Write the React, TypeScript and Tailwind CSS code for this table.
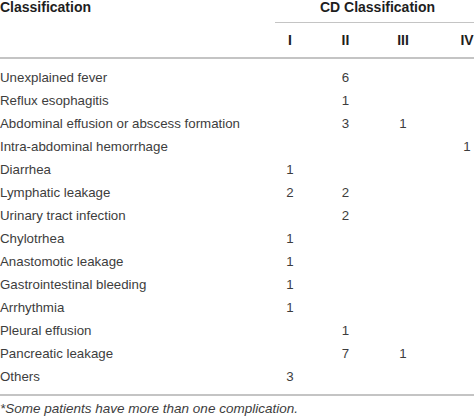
const rows: { label: string; v: (string | null)[] }[] = [
  { label: 'Unexplained fever', v: [null, '6', null, null] },
  { label: 'Reflux esophagitis', v: [null, '1', null, null] },
  { label: 'Abdominal effusion or abscess formation', v: [null, '3', '1', null] },
  { label: 'Intra-abdominal hemorrhage', v: [null, null, null, '1'] },
  { label: 'Diarrhea', v: ['1', null, null, null] },
  { label: 'Lymphatic leakage', v: ['2', '2', null, null] },
  { label: 'Urinary tract infection', v: [null, '2', null, null] },
  { label: 'Chylotrhea', v: ['1', null, null, null] },
  { label: 'Anastomotic leakage', v: ['1', null, null, null] },
  { label: 'Gastrointestinal bleeding', v: ['1', null, null, null] },
  { label: 'Arrhythmia', v: ['1', null, null, null] },
  { label: 'Pleural effusion', v: [null, '1', null, null] },
  { label: 'Pancreatic leakage', v: [null, '7', '1', null] },
  { label: 'Others', v: ['3', null, null, null] },
];

// column widths for I..IV
const colW = ['w-[56px]', 'w-[55px]', 'w-[60px]', 'w-[68px]'];
const grades = ['I', 'II', 'III', 'IV'];

export default function App() {
  return (
    <div className="w-[474px] h-[417px] overflow-hidden bg-white font-['Liberation_Sans',Arial,sans-serif] text-[13.3px] text-[#3d3d3d]">
      <div className="w-[501px]">
        {/* header */}
        <div className="flex h-[23px] font-bold text-[14px] text-[#1e1e1e] leading-[14px]">
          <div className="w-[262px]">Classification</div>
          <div className="flex-1 ml-[13px] border-b border-[#c4c4c4] text-center pr-[21px]">CD Classification</div>
        </div>
        <div className="flex h-[36px] items-center font-bold text-[14px] text-[#1e1e1e] border-b-2 border-[#c4c4c4]">
          <div className="w-[262px]"></div>
          {grades.map((g, i) => (
            <div key={g} className={`${colW[i]} text-center`}>{g}</div>
          ))}
        </div>

        {/* body */}
        <div className="pt-[7px] pb-[6px] border-b-2 border-[#c4c4c4]">
          {rows.map((r) => (
            <div key={r.label} className="flex h-[23px] items-center">
              <div className="w-[262px] whitespace-nowrap">{r.label}</div>
              {r.v.map((val, i) => (
                <div key={i} className={`${colW[i]} text-center`}>{val ?? ''}</div>
              ))}
            </div>
          ))}
        </div>

        <div className="pt-[6px] text-[13.5px] italic leading-[14px]">*Some patients have more than one complication.</div>
      </div>
    </div>
  );
}
